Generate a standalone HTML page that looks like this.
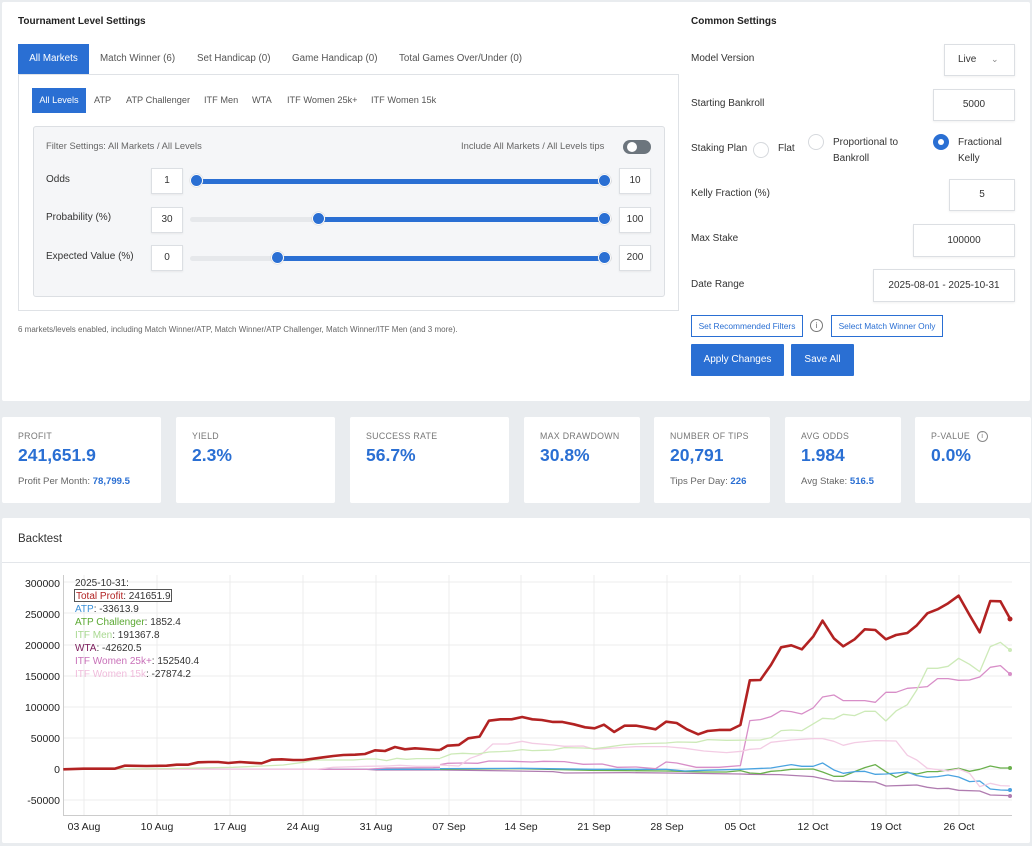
<!DOCTYPE html>
<html><head><meta charset="utf-8"><style>
*{box-sizing:border-box;margin:0;padding:0}
body{width:1032px;height:846px;background:#e9ecef;font-family:"Liberation Sans",sans-serif;color:#333;position:relative;overflow:hidden;font-size:10px}
.a{position:absolute}
.card{position:absolute;background:#fff;border-radius:2px}
.b{font-weight:bold;color:#222}
.tab{position:absolute;top:44px;height:30px;line-height:30px;color:#555;font-size:9.8px}
.st{position:absolute;top:88px;height:25px;line-height:25px;color:#555;font-size:9.2px}
.tab.act,.st.act{background:#2a6fd3;color:#fff;text-align:center}
.inp{position:absolute;background:#fff;border:1px solid #dcdfe3;text-align:center;color:#333;box-shadow:0 1px 2px rgba(0,0,0,.06)}
.track{position:absolute;height:5px;background:#e6e8eb;border-radius:3px}
.fill{position:absolute;height:5px;background:#2a6fd3}
.th{position:absolute;width:13px;height:13px;border-radius:50%;background:#2a6fd3;border:1px solid #fff;box-shadow:0 0 1px #999}
.lbl{position:absolute;color:#333;font-size:10px}
.btno{position:absolute;border:1px solid #2a6fd3;color:#2a6fd3;font-size:8.4px;text-align:center;height:22px;line-height:20px;white-space:nowrap}
.btn{position:absolute;background:#2a6fd3;color:#fff;font-size:10px;text-align:center;height:32px;line-height:32px;border-radius:1px}
.sc .t{position:absolute;left:16px;top:14px;font-size:8.8px;color:#777;letter-spacing:.3px}
.sc .v{position:absolute;left:16px;top:28px;font-size:17.5px;font-weight:bold;color:#2a6fd3}
.sc .s{position:absolute;left:16px;top:59px;font-size:9.6px;color:#666}
.sc .s b{color:#2a6fd3}
.radio{position:absolute;width:16px;height:16px;border-radius:50%;border:1px solid #d6d9dd;background:#fff}
</style></head><body>

<div class="card" style="left:2px;top:2px;width:1028px;height:399px"></div>
<div class="a b" style="left:18px;top:16px;font-size:10px">Tournament Level Settings</div>
<div class="tab act" style="left:18px;width:71px">All Markets</div>
<div class="tab" style="left:100px">Match Winner (6)</div>
<div class="tab" style="left:197px">Set Handicap (0)</div>
<div class="tab" style="left:292px">Game Handicap (0)</div>
<div class="tab" style="left:399px">Total Games Over/Under (0)</div>
<div class="a" style="left:18px;top:74px;width:661px;height:237px;border:1px solid #dfe2e6"></div>
<div class="st act" style="left:32px;width:54px">All Levels</div>
<div class="st" style="left:94px">ATP</div>
<div class="st" style="left:126px">ATP Challenger</div>
<div class="st" style="left:204px">ITF Men</div>
<div class="st" style="left:252px">WTA</div>
<div class="st" style="left:287px">ITF Women 25k+</div>
<div class="st" style="left:371px">ITF Women 15k</div>
<div class="a" style="left:33px;top:126px;width:632px;height:171px;background:#f5f6f8;border:1px solid #dcdfe3;border-radius:3px"></div>
<div class="a" style="left:46px;top:140px;color:#666;font-size:9.4px">Filter Settings: All Markets / All Levels</div>
<div class="a" style="left:461px;top:140px;color:#666;font-size:9.4px">Include All Markets / All Levels tips</div>
<div class="a" style="left:623px;top:140px;width:28px;height:14px;border-radius:7px;background:#6c757d"></div>
<div class="a" style="left:627px;top:142px;width:10px;height:10px;border-radius:50%;background:#fff"></div>

<div class="lbl" style="left:46px;top:174px">Odds</div>
<div class="lbl" style="left:46px;top:212px">Probability (%)</div>
<div class="lbl" style="left:46px;top:251px">Expected Value (%)</div>
<div class="inp" style="left:151px;top:168px;width:32px;height:26px;line-height:24px">1</div>
<div class="inp" style="left:151px;top:207px;width:32px;height:26px;line-height:24px">30</div>
<div class="inp" style="left:151px;top:245px;width:32px;height:26px;line-height:24px">0</div>
<div class="inp" style="left:619px;top:168px;width:32px;height:26px;line-height:24px">10</div>
<div class="inp" style="left:619px;top:207px;width:32px;height:26px;line-height:24px">100</div>
<div class="inp" style="left:619px;top:245px;width:32px;height:26px;line-height:24px">200</div>
<div class="track" style="left:190px;top:179px;width:422px"></div><div class="fill" style="left:197px;top:179px;width:408px"></div>
<div class="th" style="left:190px;top:174px"></div><div class="th" style="left:598px;top:174px"></div>
<div class="track" style="left:190px;top:217px;width:422px"></div><div class="fill" style="left:319px;top:217px;width:286px"></div>
<div class="th" style="left:312px;top:212px"></div><div class="th" style="left:598px;top:212px"></div>
<div class="track" style="left:190px;top:256px;width:422px"></div><div class="fill" style="left:278px;top:256px;width:327px"></div>
<div class="th" style="left:271px;top:251px"></div><div class="th" style="left:598px;top:251px"></div>
<div class="a" style="left:18px;top:325px;font-size:8px;color:#666">6 markets/levels enabled, including Match Winner/ATP, Match Winner/ATP Challenger, Match Winner/ITF Men (and 3 more).</div>

<div class="a b" style="left:691px;top:16px;font-size:10px">Common Settings</div>
<div class="lbl" style="left:691px;top:53px">Model Version</div>
<div class="inp" style="left:944px;top:44px;width:71px;height:32px;line-height:30px;text-align:left;padding-left:13px">Live<span style="position:absolute;left:46px;top:-1px;color:#888;font-size:9px">&#8964;</span></div>
<div class="lbl" style="left:691px;top:98px">Starting Bankroll</div>
<div class="inp" style="left:933px;top:89px;width:82px;height:32px;line-height:30px">5000</div>
<div class="lbl" style="left:691px;top:143px">Staking Plan</div>
<div class="radio" style="left:753px;top:142px"></div>
<div class="lbl" style="left:778px;top:143px">Flat</div>
<div class="radio" style="left:808px;top:134px"></div>
<div class="lbl" style="left:833px;top:135px;line-height:16px">Proportional to<br>Bankroll</div>
<div class="a" style="left:933px;top:134px;width:16px;height:16px;border-radius:50%;background:#2a6fd3"></div>
<div class="a" style="left:938px;top:139px;width:6px;height:6px;border-radius:50%;background:#fff"></div>
<div class="lbl" style="left:958px;top:135px;line-height:16px">Fractional<br>Kelly</div>
<div class="lbl" style="left:691px;top:188px">Kelly Fraction (%)</div>
<div class="inp" style="left:949px;top:179px;width:66px;height:32px;line-height:30px">5</div>
<div class="lbl" style="left:691px;top:233px">Max Stake</div>
<div class="inp" style="left:913px;top:224px;width:102px;height:33px;line-height:31px">100000</div>
<div class="lbl" style="left:691px;top:279px">Date Range</div>
<div class="inp" style="left:873px;top:269px;width:142px;height:33px;line-height:31px">2025-08-01 - 2025-10-31</div>
<div class="btno" style="left:691px;top:315px;width:112px">Set Recommended Filters</div>
<div class="a" style="left:810px;top:319px;width:13px;height:13px;border-radius:50%;border:1px solid #777;font-size:8px;text-align:center;line-height:11px;color:#666">i</div>
<div class="btno" style="left:831px;top:315px;width:112px">Select Match Winner Only</div>
<div class="btn" style="left:691px;top:344px;width:93px">Apply Changes</div>
<div class="btn" style="left:791px;top:344px;width:63px">Save All</div>

<div class="card sc" style="left:2px;top:417px;width:159px;height:86px"><div class="t">PROFIT</div><div class="v">241,651.9</div><div class="s">Profit Per Month: <b>78,799.5</b></div></div>
<div class="card sc" style="left:176px;top:417px;width:159px;height:86px"><div class="t">YIELD</div><div class="v">2.3%</div></div>
<div class="card sc" style="left:350px;top:417px;width:159px;height:86px"><div class="t">SUCCESS RATE</div><div class="v">56.7%</div></div>
<div class="card sc" style="left:524px;top:417px;width:116px;height:86px"><div class="t">MAX DRAWDOWN</div><div class="v">30.8%</div></div>
<div class="card sc" style="left:654px;top:417px;width:116px;height:86px"><div class="t">NUMBER OF TIPS</div><div class="v">20,791</div><div class="s">Tips Per Day: <b>226</b></div></div>
<div class="card sc" style="left:785px;top:417px;width:116px;height:86px"><div class="t">AVG ODDS</div><div class="v">1.984</div><div class="s">Avg Stake: <b>516.5</b></div></div>
<div class="card sc" style="left:915px;top:417px;width:116px;height:86px"><div class="t">P-VALUE <span style="display:inline-block;width:11px;height:11px;border:1px solid #888;border-radius:50%;font-size:7px;text-align:center;line-height:9px;margin-left:4px;vertical-align:middle">i</span></div><div class="v">0.0%</div></div>

<div class="card" style="left:2px;top:518px;width:1028px;height:325px"></div>
<div class="a" style="left:18px;top:533px;font-size:11.5px;color:#333">Backtest</div>
<div class="a" style="left:2px;top:562px;width:1028px;height:1px;background:#e3e6ea"></div>

<svg class="a" style="left:0;top:0" width="1032" height="846" viewBox="0 0 1032 846">
<g stroke="#ececec" stroke-width="1">
<line x1="63" y1="582" x2="1012" y2="582"/><line x1="63" y1="613" x2="1012" y2="613"/><line x1="63" y1="645" x2="1012" y2="645"/><line x1="63" y1="676" x2="1012" y2="676"/><line x1="63" y1="707" x2="1012" y2="707"/><line x1="63" y1="738" x2="1012" y2="738"/><line x1="63" y1="769" x2="1012" y2="769"/><line x1="63" y1="800" x2="1012" y2="800"/>
<line x1="84" y1="575" x2="84" y2="815"/><line x1="157" y1="575" x2="157" y2="815"/><line x1="230" y1="575" x2="230" y2="815"/><line x1="303" y1="575" x2="303" y2="815"/><line x1="376" y1="575" x2="376" y2="815"/><line x1="449" y1="575" x2="449" y2="815"/><line x1="521" y1="575" x2="521" y2="815"/><line x1="594" y1="575" x2="594" y2="815"/><line x1="667" y1="575" x2="667" y2="815"/><line x1="740" y1="575" x2="740" y2="815"/><line x1="813" y1="575" x2="813" y2="815"/><line x1="886" y1="575" x2="886" y2="815"/><line x1="959" y1="575" x2="959" y2="815"/>
</g>
<line x1="63.5" y1="575" x2="63.5" y2="815" stroke="#ccc"/>
<line x1="63" y1="815.5" x2="1012" y2="815.5" stroke="#ccc"/>
<g font-size="10.5" fill="#222" text-anchor="end" font-family="Liberation Sans,sans-serif">
<text x="60" y="587">300000</text><text x="60" y="618">250000</text><text x="60" y="649">200000</text><text x="60" y="680">150000</text><text x="60" y="711">100000</text><text x="60" y="742">50000</text><text x="60" y="773">0</text><text x="60" y="804">-50000</text>
</g>
<g font-size="10.5" fill="#222" text-anchor="middle" font-family="Liberation Sans,sans-serif">
<text x="84" y="830">03 Aug</text><text x="157" y="830">10 Aug</text><text x="230" y="830">17 Aug</text><text x="303" y="830">24 Aug</text><text x="376" y="830">31 Aug</text><text x="449" y="830">07 Sep</text><text x="521" y="830">14 Sep</text><text x="594" y="830">21 Sep</text><text x="667" y="830">28 Sep</text><text x="740" y="830">05 Oct</text><text x="813" y="830">12 Oct</text><text x="886" y="830">19 Oct</text><text x="959" y="830">26 Oct</text>
</g>
<g fill="none" stroke-linejoin="round">
<g transform="translate(0,680) scale(0.3333)">
<polyline vector-effect="non-scaling-stroke" stroke="#b07cb0" stroke-width="1.3" points="190,268 1100,268 1130,270 1320,270"/>
<polyline vector-effect="non-scaling-stroke" stroke="#6ab04c" stroke-width="1.3" points="190,268 1320,268"/>
<polyline vector-effect="non-scaling-stroke" stroke="#4aa3e0" stroke-width="1.3" points="190,268 1320,268"/>
<polyline vector-effect="non-scaling-stroke" stroke="#d88ec8" stroke-width="1.3" points="190,268 1100,268 1160,264 1300,263 1320,262"/>
<polyline vector-effect="non-scaling-stroke" stroke="#f3cce4" stroke-width="1.3" points="190,268 950,268 1000,262 1100,259 1160,258 1200,256 1250,259 1320,259"/>
<polyline vector-effect="non-scaling-stroke" stroke="#cdeab8" stroke-width="1.3" points="190,268 500,266 700,262 850,255 910,247 940,240 1060,240 1100,237 1130,237 1160,242 1190,235 1220,238 1250,236 1320,236"/>
<polyline vector-effect="non-scaling-stroke" stroke="#b22222" stroke-width="2.6" points="190,268 250,266 345,266 375,257 440,258 500,257 530,254 565,254 595,247 625,246 655,246 685,249 720,246 750,248 785,250 815,239 845,238 880,240 910,240 940,236 970,232 1000,228 1030,225 1065,224 1095,222 1125,211 1155,213 1185,201 1215,208 1245,205 1275,207 1310,210 1320,210"/>
</g>
<g transform="translate(440,570) scale(0.3769,0.3333)">
<polyline vector-effect="non-scaling-stroke" stroke="#b07cb0" stroke-width="1.3" points="0,600 200,603 300,605 330,609 500,608 600,609 797,612 822,613 900,614 990,620 1015,626 1045,633 1100,634 1155,636 1183,648 1240,646 1265,645 1293,652 1320,656 1348,655 1376,661 1432,663 1460,675 1512,677"/>
<polyline vector-effect="non-scaling-stroke" stroke="#6ab04c" stroke-width="1.3" points="0,598 200,596 400,601 600,603 700,606 760,606 797,602 822,609 850,611 878,604 905,602 932,598 990,597 1015,606 1045,619 1070,619 1100,605 1127,593 1155,584 1183,605 1210,622 1240,608 1265,612 1293,605 1320,605 1376,595 1405,604 1432,598 1460,588 1487,594 1512,594"/>
<polyline vector-effect="non-scaling-stroke" stroke="#4aa3e0" stroke-width="1.3" points="0,596 218,595 410,598 600,598 650,603 700,601 797,598 878,594 932,584 960,589 990,589 1015,579 1045,600 1070,610 1100,605 1127,604 1155,613 1183,612 1240,606 1265,617 1293,622 1320,620 1348,615 1376,621 1405,635 1432,633 1460,657 1487,660 1512,661"/>
<polyline vector-effect="non-scaling-stroke" stroke="#d88ec8" stroke-width="1.3" points="0,584 20,580 60,579 100,580 130,573 190,574 245,576 275,574 330,575 380,583 430,582 470,592 520,591 572,596 600,576 628,579 680,592 740,592 797,587 822,452 850,449 878,440 905,422 932,425 960,432 990,414 1015,381 1045,375 1070,392 1127,392 1155,397 1183,367 1210,367 1240,355 1265,353 1293,350 1320,326 1348,326 1376,331 1405,330 1432,321 1460,292 1487,287 1512,312"/>
<polyline vector-effect="non-scaling-stroke" stroke="#f3cce4" stroke-width="1.3" points="0,585 50,588 80,565 110,553 140,522 180,522 218,514 245,520 300,525 330,529 380,528 410,538 460,534 520,530 600,530 650,535 700,543 760,548 800,544 822,538 850,536 878,517 932,510 990,506 1015,506 1045,514 1070,526 1100,518 1155,512 1210,513 1240,556 1265,570 1293,595 1348,603 1376,597 1405,610 1432,650 1460,640 1487,647 1512,648"/>
<polyline vector-effect="non-scaling-stroke" stroke="#cdeab8" stroke-width="1.3" points="0,565 30,552 60,550 100,552 130,546 160,545 190,543 218,539 245,542 275,541 300,540 330,533 380,534 410,536 440,532 490,524 540,521 600,519 630,516 680,517 710,509 760,511 850,510 878,503 905,482 932,480 960,482 990,462 1015,445 1045,447 1070,433 1100,437 1127,424 1155,424 1183,453 1210,423 1240,404 1265,360 1293,295 1320,295 1348,289 1376,265 1405,283 1432,305 1460,230 1487,217 1512,240"/>
<polyline vector-effect="non-scaling-stroke" stroke="#b22222" stroke-width="2.6" points="0,540 20,527 50,525 75,505 105,500 130,452 160,448 190,448 218,441 245,448 270,450 300,456 325,456 355,463 385,472 410,475 435,464 462,486 490,467 520,467 545,472 572,478 600,455 628,459 655,478 685,493 710,483 740,480 770,480 797,465 822,331 850,330 878,285 905,232 932,226 960,238 990,200 1015,152 1045,205 1070,229 1100,208 1127,178 1155,180 1183,208 1210,195 1240,189 1265,166 1293,130 1320,118 1348,100 1376,77 1405,135 1432,187 1460,93 1487,94 1512,145"/>
</g>
</g>
<g>
<circle cx="1010" cy="619" r="2.5" fill="#b22222"/><circle cx="1010" cy="650" r="2" fill="#cdeab8"/><circle cx="1010" cy="674" r="2" fill="#d88ec8"/><circle cx="1010" cy="768" r="2" fill="#6ab04c"/><circle cx="1010" cy="790" r="2" fill="#f3cce4"/><circle cx="1010" cy="790" r="2" fill="#4aa3e0"/><circle cx="1010" cy="796" r="2" fill="#b07cb0"/>
</g>
<g font-size="10" font-family="Liberation Sans,sans-serif" fill="#333">
<text x="75" y="586">2025-10-31:</text>
<rect x="74.5" y="589.5" width="97" height="12" fill="#fff" stroke="#555"/>
<text x="76" y="599"><tspan fill="#b22222">Total Profit</tspan>: 241651.9</text>
<text x="75" y="612"><tspan fill="#3a8fd8">ATP</tspan>: -33613.9</text>
<text x="75" y="625"><tspan fill="#5aa832">ATP Challenger</tspan>: 1852.4</text>
<text x="75" y="638"><tspan fill="#a8d890">ITF Men</tspan>: 191367.8</text>
<text x="75" y="651"><tspan fill="#7a1a5a">WTA</tspan>: -42620.5</text>
<text x="75" y="664"><tspan fill="#c870b8">ITF Women 25k+</tspan>: 152540.4</text>
<text x="75" y="677"><tspan fill="#f0bcdc">ITF Women 15k</tspan>: -27874.2</text>
</g>
</svg>
</body></html>
